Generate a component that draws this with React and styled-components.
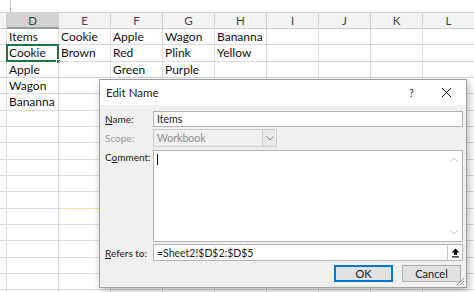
import React from 'react'
import styled, { createGlobalStyle } from 'styled-components'

const Global = createGlobalStyle`
html,body{margin:0;padding:0;background:#fff;overflow:hidden;}
*{box-sizing:border-box;}
`

const cols = ['C', 'D', 'E', 'F', 'G', 'H', 'I', 'J', 'K', 'L']
const data = [
  ['', 'Items', 'Cookie', 'Apple', 'Wagon', 'Bananna'],
  ['', 'Cookie', 'Brown', 'Red', 'Plink', 'Yellow'],
  ['', 'Apple', '', 'Green', 'Purple'],
  ['', 'Wagon'],
  ['', 'Bananna'],
]
const ROWS = 17

export default function App() {
  const rows = []
  for (let r = 0; r < ROWS; r++) rows.push(data[r] || [])
  return (
    <Page>
      <Global />
      <FormulaStrip><StripEdge /></FormulaStrip>
      <Sheet>
        <Grid>
          {cols.map((c, i) => (
            <ColHead key={c} $selected={c === 'D'}>{i === 0 ? '' : c}</ColHead>
          ))}
          {rows.map((row, r) =>
            cols.map((c, ci) => (
              <Cell key={r + c} $mark={r === 10 && c === 'E'}>
                {row[ci] || ''}
                {r === 1 && c === 'D' ? <Active><Handle /></Active> : null}
              </Cell>
            ))
          )}
        </Grid>
        <Dialog>
          <TitleBar>
            <Title>Edit Name</Title>
            <TitleIcons>
              <span>?</span>
              <svg width="11" height="11" viewBox="0 0 11 11">
                <path d="M1 1 L10 10 M10 1 L1 10" stroke="#222" strokeWidth="1" />
              </svg>
            </TitleIcons>
          </TitleBar>
          <Body>
            <FieldRow>
              <Label><u>N</u>ame:</Label>
              <TextBox $h={16}>Items</TextBox>
            </FieldRow>
            <FieldRow>
              <Label $disabled>Scope:</Label>
              <Select>
                <span>Workbook</span>
                <DropBtn>
                  <svg width="8" height="5" viewBox="0 0 8 5">
                    <path d="M0.5 0.5 L4 4 L7.5 0.5" stroke="#888" fill="none" strokeWidth="1" />
                  </svg>
                </DropBtn>
              </Select>
            </FieldRow>
            <FieldRow $top>
              <Label $pad>C<u>o</u>mment:</Label>
              <TextArea>
                <Caret />
                <ScrollBar>
                  <svg width="8" height="5" viewBox="0 0 8 5">
                    <path d="M0.5 4.5 L4 1 L7.5 4.5" stroke="#c4c4c4" fill="none" strokeWidth="1" />
                  </svg>
                  <svg width="8" height="5" viewBox="0 0 8 5">
                    <path d="M0.5 0.5 L4 4 L7.5 0.5" stroke="#c4c4c4" fill="none" strokeWidth="1" />
                  </svg>
                </ScrollBar>
              </TextArea>
            </FieldRow>
            <FieldRow>
              <Label><u>R</u>efers to:</Label>
              <TextBox $h={17}>
                <span>=Sheet2!$D$2:$D$5</span>
                <RefBtn>
                  <svg width="9" height="10" viewBox="0 0 9 10">
                    <path d="M4.5 0.5 L8.5 4.5 L6 4.5 L6 7 L3 7 L3 4.5 L0.5 4.5 Z" fill="#111" />
                    <rect x="1" y="8.3" width="7" height="1.2" fill="#111" />
                  </svg>
                </RefBtn>
              </TextBox>
            </FieldRow>
            <Buttons>
              <Button $primary>OK</Button>
              <Button>Cancel</Button>
            </Buttons>
          </Body>
          <Grip>
            <svg width="10" height="10" viewBox="0 0 10 10">
              <path d="M9 2 L2 9 M9 5 L5 9 M9 8 L8 9" stroke="#9a9a9a" strokeWidth="1" />
            </svg>
          </Grip>
        </Dialog>
      </Sheet>
    </Page>
  )
}

const Page = styled.div`
width:474px;
height:292px;
overflow:hidden;
background:#fff;
`
const FormulaStrip = styled.div`
height:13px;
background:#fff;
border-bottom:1px solid #d4d4d4;
position:relative;
`
const StripEdge = styled.div`
position:absolute;
left:10px;
top:0;
width:1px;
height:12px;
background:#c6c6c6;
`
const Sheet = styled.div`
position:relative;
`
const Grid = styled.div`
display:grid;
grid-template-columns:7px repeat(9,52px);
grid-auto-rows:16.33px;
grid-template-rows:16px;
font-family:Lato,"Liberation Sans",sans-serif;
`
const ColHead = styled.div`
background:${p => (p.$selected ? '#d3d3d3' : '#f3f3f3')};
border-right:1px solid #d0d0d0;
border-bottom:${p => (p.$selected ? '2px solid #8aa595' : '1px solid #d0d0d0')};
color:#444;
font-size:11.5px;
display:flex;
align-items:center;
justify-content:center;
`
const Cell = styled.div`
position:relative;
border-right:1px solid #dcdcdc;
border-bottom:1px solid ${p => (p.$mark ? '#e8e0a4' : '#dcdcdc')};
font-size:12px;
color:#111;
padding:0 0 0 2px;
display:flex;
align-items:center;
white-space:nowrap;
overflow:visible;
`
const Active = styled.div`
position:absolute;
left:-1px;
top:-1px;
right:-1px;
bottom:-1px;
border:2px solid #217346;
`
const Handle = styled.div`
position:absolute;
right:-4px;
bottom:-4px;
width:5px;
height:5px;
background:#217346;
border:1px solid #fff;
`
const Dialog = styled.div`
position:absolute;
left:99px;
top:66px;
width:368px;
height:209px;
background:#f0f0f0;
border:1px solid #a0a0a0;
box-shadow:2px 3px 8px rgba(0,0,0,0.28);
display:flex;
flex-direction:column;
font-family:Lato,"Noto Sans",sans-serif;
font-size:10.5px;
color:#1a1a1a;
`
const TitleBar = styled.div`
height:25px;
background:#fff;
display:flex;
align-items:center;
justify-content:space-between;
padding:0 14px 0 6px;
`
const Title = styled.div`
font-size:11.5px;
color:#222;
`
const TitleIcons = styled.div`
display:flex;
align-items:center;
gap:27px;
font-size:11px;
color:#333;
`
const Body = styled.div`
flex:1;
display:flex;
flex-direction:column;
gap:2px;
padding:6px 3px 0 5px;
`
const FieldRow = styled.div`
display:grid;
grid-template-columns:48px 1fr;
align-items:${p => (p.$top ? 'start' : 'center')};
`
const Label = styled.div`
color:${p => (p.$disabled ? '#9a9a9a' : '#1a1a1a')};
font-size:10px;
white-space:nowrap;
padding-top:${p => (p.$pad ? '2px' : '0')};
`
const TextBox = styled.div`
height:${p => p.$h}px;
background:#fff;
border:1px solid #b4b4b4;
display:flex;
align-items:center;
justify-content:space-between;
padding-left:3px;
`
const Select = styled.div`
width:124px;
height:18px;
background:#f0f0f0;
border:1px solid #cccccc;
color:#8d8d8d;
display:flex;
align-items:center;
justify-content:space-between;
padding-left:3px;
`
const DropBtn = styled.div`
width:14px;
height:16px;
border-left:1px solid #cccccc;
display:flex;
align-items:center;
justify-content:center;
background:#e9e9e9;
`
const TextArea = styled.div`
height:92px;
margin-top:1px;
background:#fff;
border:1px solid #b4b4b4;
display:flex;
justify-content:space-between;
padding:3px 0 0 3px;
`
const Caret = styled.div`
width:1px;
height:11px;
background:#111;
`
const ScrollBar = styled.div`
width:16px;
margin-top:-3px;
display:flex;
flex-direction:column;
align-items:center;
justify-content:space-between;
padding:6px 0 6px;
`
const RefBtn = styled.div`
width:15px;
height:15px;
border-left:1px solid #c8c8c8;
display:flex;
align-items:center;
justify-content:center;
background:#fff;
`
const Buttons = styled.div`
display:flex;
justify-content:flex-end;
gap:9px;
padding-right:2px;
margin-top:2px;
`
const Button = styled.div`
width:59px;
height:17px;
background:#e1e1e1;
border:${p => (p.$primary ? '2px solid #0078d7' : '1px solid #adadad')};
display:flex;
align-items:center;
justify-content:center;
font-size:11px;
color:#1a1a1a;
`
const Grip = styled.div`
position:absolute;
right:1px;
bottom:1px;
width:10px;
height:10px;
`
